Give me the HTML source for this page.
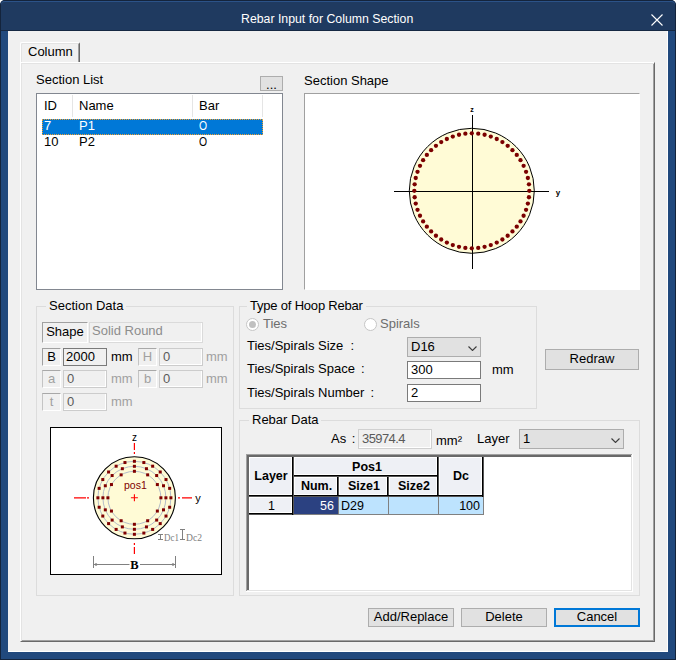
<!DOCTYPE html>
<html><head><meta charset="utf-8">
<style>
*{box-sizing:border-box;margin:0;padding:0}
html,body{width:676px;height:660px;overflow:hidden;background:#fff}
body{position:relative;font-family:"Liberation Sans",sans-serif;font-size:13px;color:#000}
.a{position:absolute}
.t{position:absolute;white-space:nowrap;line-height:14px;font-size:13px}
.g{color:#a0a0a0}
.btn{position:absolute;background:#e1e1e1;border:1px solid #adadad;text-align:center;line-height:15px}
.ed{position:absolute;background:#fff;border:1px solid #7a7a7a;line-height:16px;padding-left:3px}
.edd{position:absolute;background:#f0f0f0;border:1px solid #cccccc;box-shadow:inset -1px -1px 0 #fff;line-height:16px;padding-left:3px;color:#5a5a5a}
.lb{position:absolute;background:#f0f0f0;border:1px solid;border-color:#a0a0a0 #fff #fff #a0a0a0;text-align:center;line-height:16px}
.lbd{position:absolute;background:#f0f0f0;border:1px solid;border-color:#a8a8a8 #fff #fff #c4c4c4;text-align:center;line-height:16px;color:#a0a0a0}
.grp{position:absolute;border:1px solid #dcdcdc}
.cmb{position:absolute;background:#e1e1e1;border:1px solid #adadad;line-height:17px;padding-left:3px}
.cmb svg{position:absolute;right:3px;top:8px}
</style></head><body>
<!-- window frame -->
<div class="a" style="left:0;top:0;width:676px;height:660px;background:#21497d;border-radius:5px 5px 0 0;box-shadow:inset 0 0 0 1px #14243c"></div>
<div class="a" style="left:1px;top:1px;width:674px;height:29px;background:#1f3a60;border-radius:4px 4px 0 0;border-top:1px solid #2b5288"></div>
<div class="a" style="left:1px;top:30px;width:674px;height:1px;background:#152842"></div>
<div class="t" style="left:241px;top:12px;color:#fff;font-size:12.3px">Rebar Input for Column Section</div>
<svg class="a" style="left:651px;top:14px" width="12" height="12" viewBox="0 0 12 12"><path d="M0.5 0.5L11.5 11.5M11.5 0.5L0.5 11.5" stroke="#fff" stroke-width="1.1"/></svg>
<!-- client -->
<div class="a" style="left:8px;top:31px;width:660px;height:621px;background:#f0f0f0;border-right:1px solid #fff;border-bottom:1px solid #fff"></div>

<!-- tab panel -->
<div class="a" style="left:20px;top:62px;width:635px;height:580px;border-style:solid;border-width:1px;border-color:#fff #696969 #696969 #fff;box-shadow:inset 1px 1px 0 #e3e3e3,inset -1px -1px 0 #a0a0a0"></div>
<!-- tab -->
<div class="a" style="left:20px;top:42px;width:60px;height:20px;background:#f0f0f0;border-style:solid;border-width:1px 1px 0 1px;border-color:#fff #696969 #fff #fff;border-radius:2px 2px 0 0;box-shadow:inset 1px 1px 0 #e3e3e3,inset -1px 0 0 #a0a0a0"></div>
<div class="t" style="left:28px;top:45px">Column</div>

<!-- Section List -->
<div class="t" style="left:36px;top:73px">Section List</div>
<div class="btn" style="left:260px;top:76px;width:23px;height:15px;line-height:15px">...</div>
<div class="a" style="left:36px;top:93px;width:247px;height:197px;background:#fff;border:1px solid #828790"></div>
<div class="a" style="left:72px;top:95px;width:1px;height:22px;background:#e5e5e5"></div>
<div class="a" style="left:192px;top:95px;width:1px;height:22px;background:#e5e5e5"></div>
<div class="a" style="left:262px;top:95px;width:1px;height:22px;background:#e5e5e5"></div>
<div class="t" style="left:44px;top:99px">ID</div>
<div class="t" style="left:79px;top:99px">Name</div>
<div class="t" style="left:199px;top:99px">Bar</div>
<div class="a" style="left:42px;top:119px;width:221px;height:16px;background:#0078d7;border:1px dotted #f0a030"></div>
<div class="t" style="left:44px;top:119px;color:#fff">7</div>
<div class="t" style="left:79px;top:119px;color:#fff">P1</div>
<div class="t" style="left:199px;top:119px;color:#fff;transform:scaleX(.8);transform-origin:0 0">O</div>
<div class="t" style="left:44px;top:135px">10</div>
<div class="t" style="left:79px;top:135px">P2</div>
<div class="t" style="left:199px;top:135px;transform:scaleX(.8);transform-origin:0 0">O</div>

<!-- Section Shape -->
<div class="t" style="left:304px;top:74px">Section Shape</div>
<div class="a" style="left:304px;top:93px;width:336px;height:197px;background:#fff;border:1px solid;border-color:#a0a0a0 #fff #fff #a0a0a0"></div>
<svg class="a" style="left:304px;top:93px" width="336" height="197" id="shape"><circle cx="167.8" cy="97.80000000000001" r="62.5" fill="#fffbd6" stroke="#000" stroke-width="1"/>
<path d="M90 98.5H245M168.5 22V176" stroke="#000" stroke-width="1"/>
<circle cx="225.30" cy="97.80" r="2.15" fill="#7b0000"/>
<circle cx="224.94" cy="91.36" r="2.15" fill="#7b0000"/>
<circle cx="223.86" cy="85.01" r="2.15" fill="#7b0000"/>
<circle cx="222.07" cy="78.81" r="2.15" fill="#7b0000"/>
<circle cx="219.61" cy="72.85" r="2.15" fill="#7b0000"/>
<circle cx="216.49" cy="67.21" r="2.15" fill="#7b0000"/>
<circle cx="212.76" cy="61.95" r="2.15" fill="#7b0000"/>
<circle cx="208.46" cy="57.14" r="2.15" fill="#7b0000"/>
<circle cx="203.65" cy="52.84" r="2.15" fill="#7b0000"/>
<circle cx="198.39" cy="49.11" r="2.15" fill="#7b0000"/>
<circle cx="192.75" cy="45.99" r="2.15" fill="#7b0000"/>
<circle cx="186.79" cy="43.53" r="2.15" fill="#7b0000"/>
<circle cx="180.59" cy="41.74" r="2.15" fill="#7b0000"/>
<circle cx="174.24" cy="40.66" r="2.15" fill="#7b0000"/>
<circle cx="167.80" cy="40.30" r="2.15" fill="#7b0000"/>
<circle cx="161.36" cy="40.66" r="2.15" fill="#7b0000"/>
<circle cx="155.01" cy="41.74" r="2.15" fill="#7b0000"/>
<circle cx="148.81" cy="43.53" r="2.15" fill="#7b0000"/>
<circle cx="142.85" cy="45.99" r="2.15" fill="#7b0000"/>
<circle cx="137.21" cy="49.11" r="2.15" fill="#7b0000"/>
<circle cx="131.95" cy="52.84" r="2.15" fill="#7b0000"/>
<circle cx="127.14" cy="57.14" r="2.15" fill="#7b0000"/>
<circle cx="122.84" cy="61.95" r="2.15" fill="#7b0000"/>
<circle cx="119.11" cy="67.21" r="2.15" fill="#7b0000"/>
<circle cx="115.99" cy="72.85" r="2.15" fill="#7b0000"/>
<circle cx="113.53" cy="78.81" r="2.15" fill="#7b0000"/>
<circle cx="111.74" cy="85.01" r="2.15" fill="#7b0000"/>
<circle cx="110.66" cy="91.36" r="2.15" fill="#7b0000"/>
<circle cx="110.30" cy="97.80" r="2.15" fill="#7b0000"/>
<circle cx="110.66" cy="104.24" r="2.15" fill="#7b0000"/>
<circle cx="111.74" cy="110.59" r="2.15" fill="#7b0000"/>
<circle cx="113.53" cy="116.79" r="2.15" fill="#7b0000"/>
<circle cx="115.99" cy="122.75" r="2.15" fill="#7b0000"/>
<circle cx="119.11" cy="128.39" r="2.15" fill="#7b0000"/>
<circle cx="122.84" cy="133.65" r="2.15" fill="#7b0000"/>
<circle cx="127.14" cy="138.46" r="2.15" fill="#7b0000"/>
<circle cx="131.95" cy="142.76" r="2.15" fill="#7b0000"/>
<circle cx="137.21" cy="146.49" r="2.15" fill="#7b0000"/>
<circle cx="142.85" cy="149.61" r="2.15" fill="#7b0000"/>
<circle cx="148.81" cy="152.07" r="2.15" fill="#7b0000"/>
<circle cx="155.01" cy="153.86" r="2.15" fill="#7b0000"/>
<circle cx="161.36" cy="154.94" r="2.15" fill="#7b0000"/>
<circle cx="167.80" cy="155.30" r="2.15" fill="#7b0000"/>
<circle cx="174.24" cy="154.94" r="2.15" fill="#7b0000"/>
<circle cx="180.59" cy="153.86" r="2.15" fill="#7b0000"/>
<circle cx="186.79" cy="152.07" r="2.15" fill="#7b0000"/>
<circle cx="192.75" cy="149.61" r="2.15" fill="#7b0000"/>
<circle cx="198.39" cy="146.49" r="2.15" fill="#7b0000"/>
<circle cx="203.65" cy="142.76" r="2.15" fill="#7b0000"/>
<circle cx="208.46" cy="138.46" r="2.15" fill="#7b0000"/>
<circle cx="212.76" cy="133.65" r="2.15" fill="#7b0000"/>
<circle cx="216.49" cy="128.39" r="2.15" fill="#7b0000"/>
<circle cx="219.61" cy="122.75" r="2.15" fill="#7b0000"/>
<circle cx="222.07" cy="116.79" r="2.15" fill="#7b0000"/>
<circle cx="223.86" cy="110.59" r="2.15" fill="#7b0000"/>
<circle cx="224.94" cy="104.24" r="2.15" fill="#7b0000"/>
<text x="168" y="19" font-size="7" font-weight="bold" text-anchor="middle" font-family="Liberation Sans">z</text>
<text x="254" y="101.5" font-size="8" font-weight="bold" text-anchor="middle" font-family="Liberation Sans">y</text></svg>

<!-- Section Data group -->
<div class="grp" style="left:36px;top:306px;width:198px;height:290px"></div>
<div class="t" style="left:46px;top:299px;background:#f0f0f0;padding:0 3px">Section Data</div>
<div class="lb" style="left:42px;top:322px;width:46px;height:21px;line-height:17px">Shape</div>
<div class="edd" style="left:89px;top:322px;width:114px;height:21px;line-height:15px;padding-left:2px;border-color:#dadada;color:#8d8d8d">Solid Round</div>
<div class="lb" style="left:42px;top:348px;width:19px;height:18px">B</div>
<div class="ed" style="left:63px;top:348px;width:44px;height:18px;background:#f0f0f0;padding-left:2px">2000</div>
<div class="t" style="left:111px;top:350px">mm</div>
<div class="lbd" style="left:138px;top:348px;width:19px;height:18px">H</div>
<div class="edd" style="left:159px;top:348px;width:44px;height:18px">0</div>
<div class="t g" style="left:206px;top:350px">mm</div>
<div class="lbd" style="left:42px;top:370px;width:19px;height:18px">a</div>
<div class="edd" style="left:63px;top:370px;width:44px;height:18px">0</div>
<div class="t g" style="left:111px;top:372px">mm</div>
<div class="lbd" style="left:138px;top:370px;width:19px;height:18px">b</div>
<div class="edd" style="left:159px;top:370px;width:44px;height:18px">0</div>
<div class="t g" style="left:206px;top:372px">mm</div>
<div class="lbd" style="left:42px;top:393px;width:19px;height:18px">t</div>
<div class="edd" style="left:63px;top:393px;width:44px;height:18px">0</div>
<div class="t g" style="left:111px;top:395px">mm</div>
<div class="a" style="left:50px;top:427px;width:172px;height:148px;background:#fff;border:1px solid #000"></div>
<svg class="a" style="left:50px;top:427px" width="172" height="148" id="draw"><circle cx="84.4" cy="70.80000000000001" r="41" fill="#fffbd6" stroke="#000" stroke-width="1.1"/>
<circle cx="84.4" cy="70.80000000000001" r="36.5" fill="none" stroke="#b4bcc8" stroke-width="1"/>
<circle cx="84.4" cy="70.80000000000001" r="31.5" fill="none" stroke="#b4bcc8" stroke-width="1"/>
<circle cx="84.4" cy="70.80000000000001" r="26.5" fill="none" stroke="#b4bcc8" stroke-width="1"/>
<rect x="119.40" y="69.30" width="3" height="3" fill="#800000"/>
<rect x="118.16" y="59.85" width="3" height="3" fill="#800000"/>
<rect x="114.51" y="51.05" width="3" height="3" fill="#800000"/>
<rect x="108.71" y="43.49" width="3" height="3" fill="#800000"/>
<rect x="101.15" y="37.69" width="3" height="3" fill="#800000"/>
<rect x="92.35" y="34.04" width="3" height="3" fill="#800000"/>
<rect x="82.90" y="32.80" width="3" height="3" fill="#800000"/>
<rect x="73.45" y="34.04" width="3" height="3" fill="#800000"/>
<rect x="64.65" y="37.69" width="3" height="3" fill="#800000"/>
<rect x="57.09" y="43.49" width="3" height="3" fill="#800000"/>
<rect x="51.29" y="51.05" width="3" height="3" fill="#800000"/>
<rect x="47.64" y="59.85" width="3" height="3" fill="#800000"/>
<rect x="46.40" y="69.30" width="3" height="3" fill="#800000"/>
<rect x="47.64" y="78.75" width="3" height="3" fill="#800000"/>
<rect x="51.29" y="87.55" width="3" height="3" fill="#800000"/>
<rect x="57.09" y="95.11" width="3" height="3" fill="#800000"/>
<rect x="64.65" y="100.91" width="3" height="3" fill="#800000"/>
<rect x="73.45" y="104.56" width="3" height="3" fill="#800000"/>
<rect x="82.90" y="105.80" width="3" height="3" fill="#800000"/>
<rect x="92.35" y="104.56" width="3" height="3" fill="#800000"/>
<rect x="101.15" y="100.91" width="3" height="3" fill="#800000"/>
<rect x="108.71" y="95.11" width="3" height="3" fill="#800000"/>
<rect x="114.51" y="87.55" width="3" height="3" fill="#800000"/>
<rect x="118.16" y="78.75" width="3" height="3" fill="#800000"/>
<rect x="114.40" y="69.30" width="3" height="3" fill="#800000"/>
<rect x="112.00" y="57.25" width="3" height="3" fill="#800000"/>
<rect x="105.17" y="47.03" width="3" height="3" fill="#800000"/>
<rect x="94.95" y="40.20" width="3" height="3" fill="#800000"/>
<rect x="82.90" y="37.80" width="3" height="3" fill="#800000"/>
<rect x="70.85" y="40.20" width="3" height="3" fill="#800000"/>
<rect x="60.63" y="47.03" width="3" height="3" fill="#800000"/>
<rect x="53.80" y="57.25" width="3" height="3" fill="#800000"/>
<rect x="51.40" y="69.30" width="3" height="3" fill="#800000"/>
<rect x="53.80" y="81.35" width="3" height="3" fill="#800000"/>
<rect x="60.63" y="91.57" width="3" height="3" fill="#800000"/>
<rect x="70.85" y="98.40" width="3" height="3" fill="#800000"/>
<rect x="82.90" y="100.80" width="3" height="3" fill="#800000"/>
<rect x="94.95" y="98.40" width="3" height="3" fill="#800000"/>
<rect x="105.17" y="91.57" width="3" height="3" fill="#800000"/>
<rect x="112.00" y="81.35" width="3" height="3" fill="#800000"/>
<rect x="109.40" y="69.30" width="3" height="3" fill="#800000"/>
<rect x="105.85" y="56.05" width="3" height="3" fill="#800000"/>
<rect x="96.15" y="46.35" width="3" height="3" fill="#800000"/>
<rect x="82.90" y="42.80" width="3" height="3" fill="#800000"/>
<rect x="69.65" y="46.35" width="3" height="3" fill="#800000"/>
<rect x="59.95" y="56.05" width="3" height="3" fill="#800000"/>
<rect x="56.40" y="69.30" width="3" height="3" fill="#800000"/>
<rect x="59.95" y="82.55" width="3" height="3" fill="#800000"/>
<rect x="69.65" y="92.25" width="3" height="3" fill="#800000"/>
<rect x="82.90" y="95.80" width="3" height="3" fill="#800000"/>
<rect x="96.15" y="92.25" width="3" height="3" fill="#800000"/>
<rect x="105.85" y="82.55" width="3" height="3" fill="#800000"/>
<path d="M84.4 16V23M84.4 25V27" stroke="#ff0000" stroke-width="1.2"/>
<path d="M84.4 116V118M84.4 120V127" stroke="#ff0000" stroke-width="1.2"/>
<path d="M24 70.80000000000001H36M37 70.80000000000001H39" stroke="#ff0000" stroke-width="1.2"/>
<path d="M128 70.80000000000001H130M132 70.80000000000001H142" stroke="#ff0000" stroke-width="1.2"/>
<path d="M80.9 70.80000000000001H87.9M84.4 67.30000000000001V74.30000000000001" stroke="#ff0000" stroke-width="1.1"/>
<text x="84.4" y="14" font-size="10" text-anchor="middle" font-family="Liberation Sans">z</text>
<text x="148" y="75" font-size="11" text-anchor="middle" font-family="Liberation Sans">y</text>
<text x="85.4" y="62" font-size="10.5" fill="#800000" text-anchor="middle" font-family="Liberation Sans">pos1</text>
<path d="M43.5 129V141M125.5 129V141M44 137.5H125" stroke="#808080" stroke-width="1"/>
<rect x="79.5" y="131" width="10.5" height="12" fill="#fff"/>
<circle cx="46" cy="137.5" r="1.3" fill="#808080"/><circle cx="123" cy="137.5" r="1.3" fill="#808080"/>
<text x="84.4" y="142" font-size="12.5" font-weight="bold" text-anchor="middle" font-family="Liberation Serif">B</text>
<path d="M108 107.5H113M108 112.5H113M110.5 107V113M130 102.5H135M130 112.5H135M132.5 102V113" stroke="#808080" stroke-width="1" fill="none"/>
<text x="114" y="113.5" font-size="10" fill="#808080" font-family="Liberation Serif" textLength="15" lengthAdjust="spacingAndGlyphs">Dc1</text>
<text x="136" y="113.5" font-size="10" fill="#808080" font-family="Liberation Serif" textLength="16" lengthAdjust="spacingAndGlyphs">Dc2</text></svg>

<!-- Type of Hoop Rebar -->
<div class="grp" style="left:239px;top:306px;width:298px;height:103px"></div>
<div class="t" style="left:247px;top:299px;background:#f0f0f0;padding:0 3px;letter-spacing:-0.2px">Type of Hoop Rebar</div>
<div class="a" style="left:246px;top:318px;width:13px;height:13px;border-radius:50%;border:1px solid #c6c6c6;background:#fff"></div>
<div class="a" style="left:249px;top:321px;width:7px;height:7px;border-radius:50%;background:#c0c0c0"></div>
<div class="t" style="left:263px;top:317px;color:#6d6d6d">Ties</div>
<div class="a" style="left:364px;top:318px;width:13px;height:13px;border-radius:50%;border:1px solid #c6c6c6;background:#fff"></div>
<div class="t" style="left:380px;top:317px;color:#6d6d6d">Spirals</div>
<div class="t" style="left:247px;top:339px">Ties/Spirals Size <span style="margin-left:3.5px">:</span></div>
<div class="t" style="left:247px;top:362px">Ties/Spirals Space <span style="margin-left:2.6px">:</span></div>
<div class="t" style="left:247px;top:386px">Ties/Spirals Number <span style="margin-left:2.5px">:</span></div>
<div class="cmb" style="left:407px;top:337px;width:74px;height:20px">D16<svg width="9" height="5" viewBox="0 0 9 5"><path d="M0.5 0.5L4.5 4.5L8.5 0.5" fill="none" stroke="#3c3c3c" stroke-width="1.1"/></svg></div>
<div class="ed" style="left:407px;top:361px;width:74px;height:18px">300</div>
<div class="t" style="left:492px;top:363px">mm</div>
<div class="ed" style="left:407px;top:384px;width:74px;height:18px">2</div>

<div class="btn" style="left:545px;top:349px;width:94px;height:21px;line-height:17px">Redraw</div>

<!-- Rebar Data -->
<div class="grp" style="left:239px;top:420px;width:401px;height:176px"></div>
<div class="t" style="left:249px;top:413px;background:#f0f0f0;padding:0 3px">Rebar Data</div>
<div class="t" style="left:331px;top:432px">As <span style="margin-left:2px">:</span></div>
<div class="edd" style="left:358px;top:429px;width:74px;height:20px;line-height:18px;border-color:#d0d0d0;letter-spacing:-0.6px">35974.4</div>
<div class="t" style="left:436px;top:434px">mm²</div>
<div class="t" style="left:477px;top:432px">Layer</div>
<div class="cmb" style="left:519px;top:429px;width:105px;height:20px">1<svg width="9" height="5" viewBox="0 0 9 5"><path d="M0.5 0.5L4.5 4.5L8.5 0.5" fill="none" stroke="#3c3c3c" stroke-width="1.1"/></svg></div>
<!--GRID--><svg class="a" style="left:246px;top:454px" width="387" height="138" shape-rendering="crispEdges"><rect x="0" y="0" width="387" height="138" fill="#ffffff"/><rect x="0" y="0" width="387" height="1" fill="#a0a0a0"/><rect x="0" y="0" width="1" height="138" fill="#a0a0a0"/><rect x="1" y="1" width="385" height="2" fill="#696969"/><rect x="1" y="1" width="2" height="136" fill="#696969"/><rect x="386" y="0" width="1" height="138" fill="#ffffff"/><rect x="0" y="137" width="387" height="1" fill="#ffffff"/><rect x="385" y="1" width="1" height="136" fill="#e3e3e3"/><rect x="1" y="136" width="385" height="1" fill="#e3e3e3"/><rect x="3" y="3" width="43" height="38" fill="#ffffff"/><rect x="4" y="4" width="41" height="36" fill="#eef0f5"/><rect x="46" y="3" width="1" height="40" fill="#000"/><rect x="47" y="3" width="1" height="40" fill="#555"/><rect x="48" y="3" width="143" height="18" fill="#ffffff"/><rect x="49" y="4" width="141" height="16" fill="#eef0f5"/><rect x="48" y="21" width="143" height="1" fill="#000"/><rect x="48" y="22" width="143" height="1" fill="#555"/><rect x="191" y="3" width="1" height="40" fill="#000"/><rect x="192" y="3" width="1" height="40" fill="#555"/><rect x="48" y="23" width="43" height="18" fill="#ffffff"/><rect x="49" y="24" width="41" height="16" fill="#eef0f5"/><rect x="91" y="23" width="1" height="20" fill="#000"/><rect x="92" y="23" width="1" height="20" fill="#555"/><rect x="93" y="23" width="48" height="18" fill="#ffffff"/><rect x="94" y="24" width="46" height="16" fill="#eef0f5"/><rect x="141" y="23" width="1" height="20" fill="#000"/><rect x="142" y="23" width="1" height="20" fill="#555"/><rect x="143" y="23" width="48" height="18" fill="#ffffff"/><rect x="144" y="24" width="46" height="16" fill="#eef0f5"/><rect x="193" y="3" width="43" height="38" fill="#ffffff"/><rect x="194" y="4" width="41" height="36" fill="#eef0f5"/><rect x="236" y="3" width="1" height="40" fill="#000"/><rect x="237" y="3" width="1" height="40" fill="#555"/><rect x="3" y="41" width="43" height="1" fill="#000"/><rect x="3" y="42" width="43" height="1" fill="#555"/><rect x="48" y="41" width="188" height="1" fill="#000"/><rect x="48" y="42" width="188" height="1" fill="#555"/><rect x="3" y="43" width="43" height="16" fill="#ffffff"/><rect x="4" y="44" width="41" height="14" fill="#eef0f5"/><rect x="3" y="59" width="45" height="1" fill="#000"/><rect x="3" y="60" width="45" height="1" fill="#555"/><rect x="46" y="43" width="1" height="18" fill="#000"/><rect x="47" y="43" width="1" height="18" fill="#555"/><rect x="48" y="43" width="44" height="17" fill="#2b4181"/><rect x="92" y="43" width="1" height="18" fill="#808080"/><rect x="93" y="43" width="49" height="17" fill="#bde3fe"/><rect x="142" y="43" width="1" height="18" fill="#808080"/><rect x="143" y="43" width="49" height="17" fill="#bde3fe"/><rect x="192" y="43" width="1" height="18" fill="#808080"/><rect x="193" y="43" width="44" height="17" fill="#bde3fe"/><rect x="237" y="43" width="1" height="18" fill="#808080"/><rect x="48" y="60" width="190" height="1" fill="#808080"/><g shape-rendering="auto"><text x="25" y="26" text-anchor="middle" font-family="Liberation Sans" font-size="12.5" font-weight="bold" fill="#000">Layer</text><text x="121" y="17" text-anchor="middle" font-family="Liberation Sans" font-size="12.5" font-weight="bold" fill="#000">Pos1</text><text x="70.5" y="36" text-anchor="middle" font-family="Liberation Sans" font-size="12.5" font-weight="bold" fill="#000">Num.</text><text x="118" y="36" text-anchor="middle" font-family="Liberation Sans" font-size="12.5" font-weight="bold" fill="#000">Size1</text><text x="168" y="36" text-anchor="middle" font-family="Liberation Sans" font-size="12.5" font-weight="bold" fill="#000">Size2</text><text x="215" y="26" text-anchor="middle" font-family="Liberation Sans" font-size="12.5" font-weight="bold" fill="#000">Dc</text><text x="25.5" y="56" text-anchor="middle" font-family="Liberation Sans" font-size="12.5" fill="#000">1</text><text x="88" y="56" text-anchor="end" font-family="Liberation Sans" font-size="12.5" fill="#fff">56</text><text x="95" y="56" text-anchor="start" font-family="Liberation Sans" font-size="12.5" fill="#000">D29</text><text x="234" y="56" text-anchor="end" font-family="Liberation Sans" font-size="12.5" fill="#000">100</text></g></svg><!--/GRID-->

<!-- bottom buttons -->
<div class="btn" style="left:368px;top:608px;width:86px;height:19px">Add/Replace</div>
<div class="btn" style="left:461px;top:608px;width:86px;height:19px">Delete</div>
<div class="btn" style="left:554px;top:608px;width:86px;height:19px;border:2px solid #0078d7;line-height:13px">Cancel</div>
</body></html>
